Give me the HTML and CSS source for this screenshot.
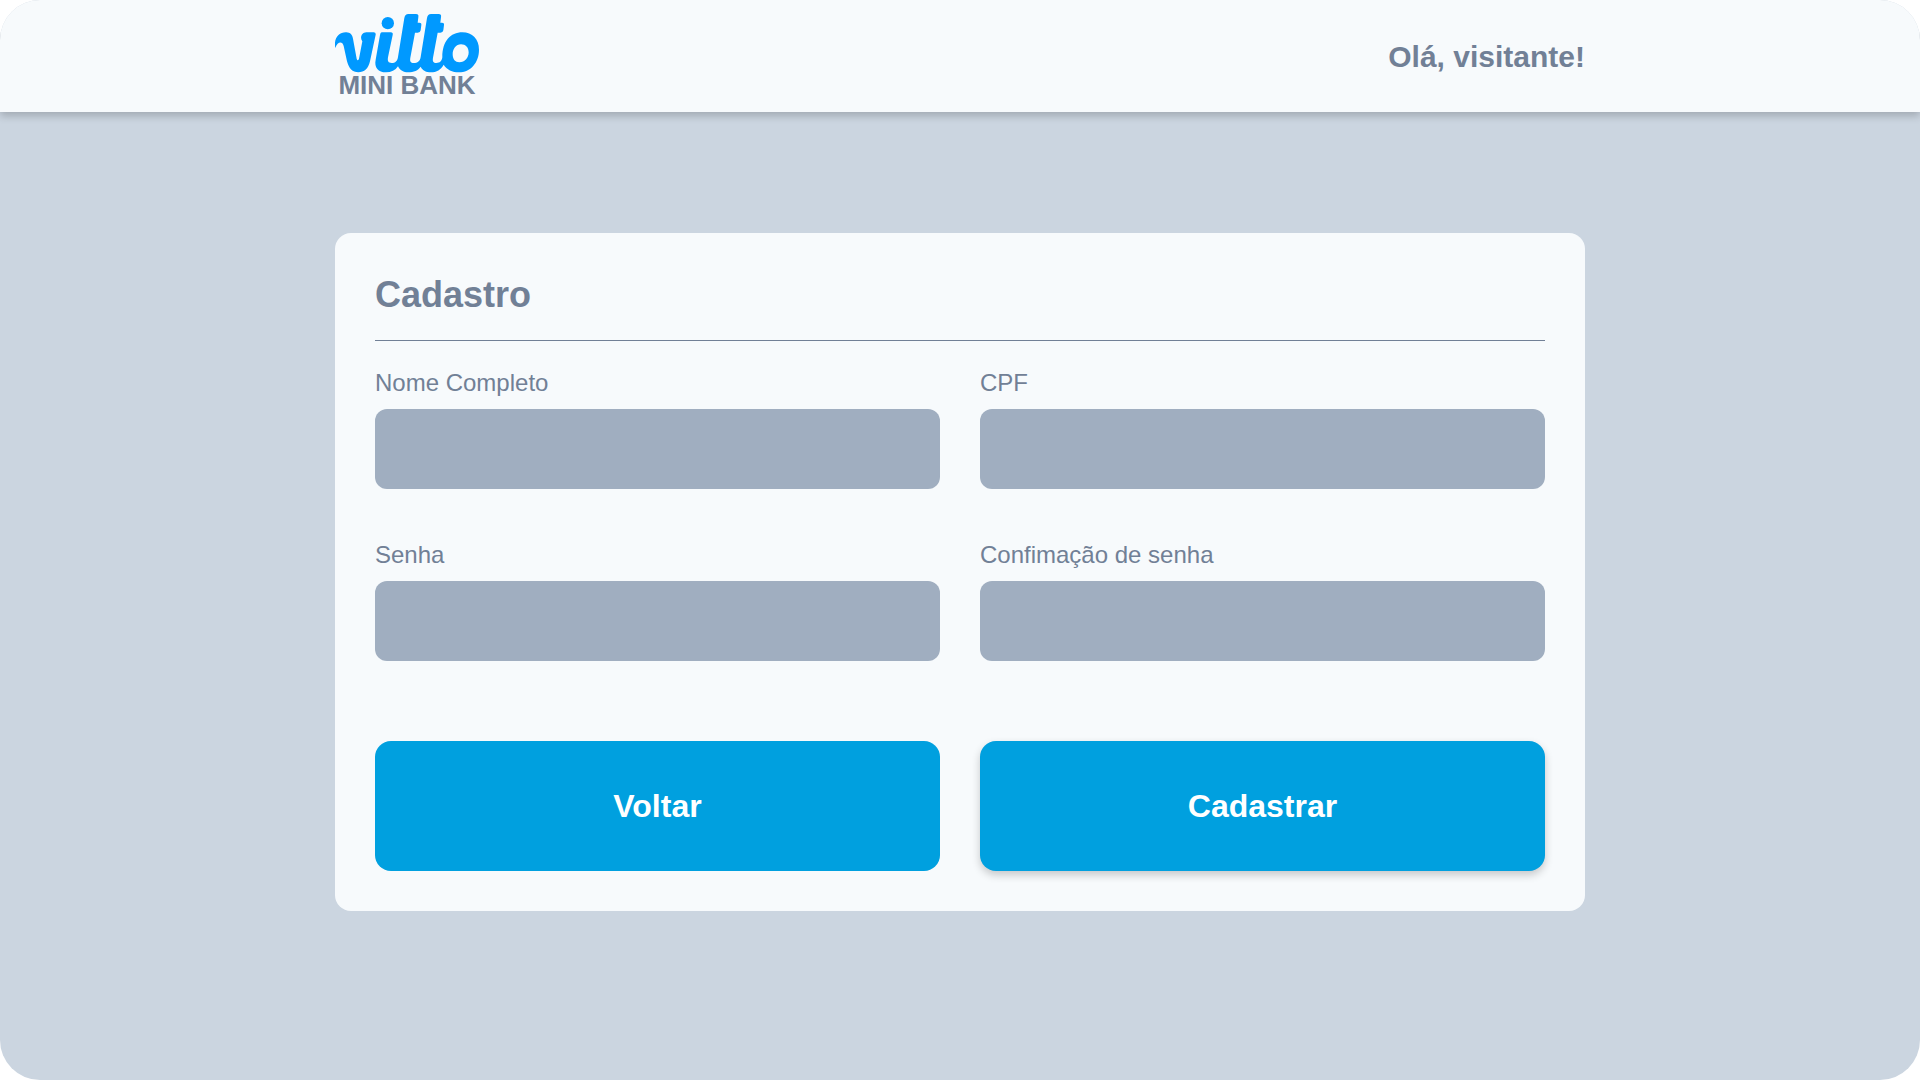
FILE: index.html
```html
<!DOCTYPE html>
<html lang="pt-BR">
<head>
  <meta charset="utf-8">
  <meta name="viewport" content="width=device-width, initial-scale=1">
  <title>Vitto Mini Bank - Cadastro</title>
  <link rel="stylesheet" href="styles.css">
</head>
<body>
  <header class="header">
    <div class="container header-content">
      <a class="brand" href="#">
        <svg class="brand-logo" viewBox="30 26 432 177" role="img" aria-label="vitto">
          <path d="M31 128C25 98 42 80 64 81C76 82 82 88 84 100L95 160Q98 170 102 160L112 108C104 98 109 82 124 81H146Q153 81 152 88L135 168C130 190 118 201 100 201C82 201 72 190 66 168L56 122C52 107 38 108 31 128Z"/>
          <circle cx="188.500" cy="53.500" r="18.500"/>
          <path d="M170 81H197Q205 81 203 89L189 156C187 168 190 173 200 173C211 173 217 168 219 155L238 38Q240 26 250 26H273Q282 26 280 36L278 52H283Q290 52 289 59L287 75Q286 82 278 82H270L256 157C254 168 257 173 266 173C278 173 285 168 287 155L306 38Q308 26 318 26H341Q350 26 348 36L346 52H351Q358 52 357 59L355 75Q354 82 346 82H338L324 157C322 168 325 173 334 173C345 173 350 168 352 156C352 108 376 81 412 81C442 81 462 102 462 133C462 172 436 201 402 201C382 201 365 193 356 178C348 193 335 201 317 201C304 201 293 196 287 184C279 195 267 201 249 201C236 201 225 196 219 183C211 195 199 201 183 201C160 201 147 186 152 163L165 89Q166 81 170 81ZM408 117C393 117 383 131 383 147C383 162 391 171 403 171C420 171 431 157 431 141C431 126 422 117 408 117Z" fill-rule="evenodd"/>
        </svg>
        <span class="brand-name">MINI BANK</span>
      </a>
      <p class="greeting">Olá, visitante!</p>
    </div>
  </header>
  <main class="container">
    <form class="card">
      <h1 class="card-title">Cadastro</h1>
      <div class="fields">
        <div class="field">
          <label for="nome">Nome Completo</label>
          <input id="nome" type="text" autocomplete="name">
        </div>
        <div class="field">
          <label for="cpf">CPF</label>
          <input id="cpf" type="text" inputmode="numeric">
        </div>
        <div class="field">
          <label for="senha">Senha</label>
          <input id="senha" type="password">
        </div>
        <div class="field">
          <label for="confirmacao">Confimação de senha</label>
          <input id="confirmacao" type="password">
        </div>
      </div>
      <div class="actions">
        <button class="button" type="button">Voltar</button>
        <button class="button button-raised" type="submit">Cadastrar</button>
      </div>
    </form>
  </main>
</body>
</html>
```
FILE: styles.css
```css
* {
  box-sizing: border-box;
  margin: 0;
}

html {
  background: #fff;
}

body {
  min-height: 100vh;
  border-radius: 40px;
  overflow: hidden;
  background: #cbd5e0;
  color: #718096;
  font-family: "Liberation Sans", Arial, sans-serif;
}

.container {
  width: 100%;
  max-width: 1290px;
  margin: 0 auto;
  padding: 0 20px;
}

.header {
  padding: 14px 0;
  background: #f7fafc;
  box-shadow: 0 4px 8px rgba(0, 0, 0, 0.2);
}

.header-content {
  display: flex;
  align-items: center;
  justify-content: space-between;
}

.brand {
  display: flex;
  flex-direction: column;
  align-items: center;
  color: inherit;
  text-decoration: none;
}

.brand-logo {
  width: 144px;
  height: 59px;
  fill: #0099ff;
}

.brand-name {
  font-size: 26px;
  font-weight: 700;
  line-height: 25px;
}

.greeting {
  font-size: 30px;
  font-weight: 700;
  line-height: 35px;
}

.card {
  margin: 121px 0;
  padding: 40px;
  border-radius: 16px;
  background: #f7fafc;
}

.card-title {
  margin-bottom: 28px;
  padding-bottom: 23px;
  border-bottom: 1px solid #718096;
  font-size: 36px;
  line-height: 44px;
}

.fields,
.actions {
  display: grid;
  grid-template-columns: repeat(2, 1fr);
  column-gap: 40px;
}

.fields {
  row-gap: 52px;
}

.actions {
  row-gap: 20px;
  margin-top: 80px;
}

.field {
  display: flex;
  flex-direction: column;
  gap: 12px;
}

.field label {
  font-size: 24px;
  line-height: 28px;
}

.field input {
  width: 100%;
  height: 80px;
  padding: 0 20px;
  border: 0;
  border-radius: 12px;
  background: #a0aec0;
  color: #2d3748;
  font: inherit;
  font-size: 24px;
}

.button {
  height: 130px;
  border: 0;
  border-radius: 16px;
  background: #00a0df;
  color: #fff;
  font: inherit;
  font-size: 32px;
  font-weight: 700;
  cursor: pointer;
}

.button-raised {
  box-shadow: 0 4px 8px rgba(0, 0, 0, 0.2);
}

@media (max-width: 800px) {
  .fields,
  .actions {
    grid-template-columns: 1fr;
  }
}
```
